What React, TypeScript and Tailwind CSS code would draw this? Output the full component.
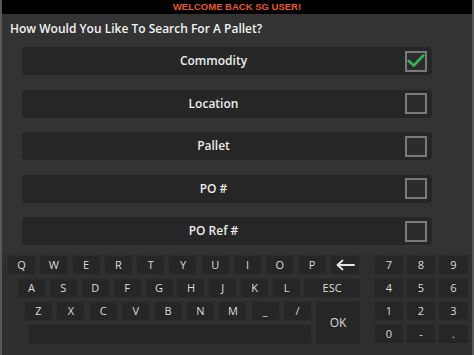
import React from 'react';

const options = ['Commodity', 'Location', 'Pallet', 'PO #', 'PO Ref #'];

function Key({ label, className = '' }: { label: React.ReactNode; className?: string }) {
  return (
    <div
      className={`flex h-[20px] items-center justify-center rounded-[4px] bg-[#262626] text-[11px] text-[#dcdcdc] shadow-[inset_0_0_0_1px_#2e2e2e] ${className}`}
    >
      {label}
    </div>
  );
}

function Checkbox({ checked }: { checked: boolean }) {
  return (
    <div className="flex h-[21px] w-[22px] items-center justify-center border-2 border-[#7a7a7a] bg-[#2c2c2c]">
      {checked && (
        <svg width="20" height="16" viewBox="0 0 20 16">
          <path d="M2 8 L7.5 13 L18 2" fill="none" stroke="#35b552" strokeWidth="3" strokeLinecap="round" strokeLinejoin="round" />
        </svg>
      )}
    </div>
  );
}

export default function App() {
  const row1 = ['Q', 'W', 'E', 'R', 'T', 'Y', 'U', 'I', 'O', 'P'];
  const row2 = ['A', 'S', 'D', 'F', 'G', 'H', 'J', 'K', 'L'];
  const row3 = ['Z', 'X', 'C', 'V', 'B', 'N', 'M', '_', '/'];
  const numpad = ['7', '8', '9', '4', '5', '6', '1', '2', '3', '0', '-', '.'];

  return (
    <div
      className="flex h-[355px] w-[474px] flex-col overflow-hidden border-x-2 border-[#585858] bg-[#333333]"
      style={{ fontFamily: '"Open Sans", "Noto Sans", sans-serif' }}
    >
      {/* header */}
      <div className="flex h-[14px] shrink-0 items-center justify-center bg-black">
        <span
          className="text-[9.5px] font-bold leading-none text-[#e8582c]"
          style={{ fontFamily: '"Liberation Sans", Arial, sans-serif' }}
        >
          WELCOME BACK SG USER!
        </span>
      </div>

      <div className="pl-[8px] pt-[6px] text-[12px] font-semibold leading-[18px] text-[#f2f2f2]">
        How Would You Like To Search For A Pallet?
      </div>

      {/* options */}
      <div className="ml-[20px] mt-[9px] flex w-[410px] flex-col gap-[14.5px]">
        {options.map((opt, i) => (
          <div key={opt} className="flex h-[28px] items-center rounded-[4px] bg-[#262626] pr-[5px]">
            <div className="flex-1 text-center text-[12px] font-semibold text-[#ececec]">{opt}</div>
            <Checkbox checked={i === 0} />
          </div>
        ))}
      </div>

      {/* keyboard */}
      <div className="mt-[9px] flex flex-1 bg-[#2f2f2f] pl-[5px] pt-[1px]">
        <div className="flex w-[355px] flex-col gap-[3px]">
          <div className="flex gap-[3.3px]">
            {row1.map((k) => (
              <Key key={k} label={k} className="w-[29px]" />
            ))}
            <Key
              label={
                <svg width="20" height="12" viewBox="0 0 20 12">
                  <path d="M19 6 H3 M7.5 1.5 L2.5 6 L7.5 10.5" fill="none" stroke="#e6e6e6" strokeWidth="1.8" strokeLinecap="round" strokeLinejoin="round" />
                </svg>
              }
              className="w-[30px]"
            />
          </div>
          <div className="ml-[10px] flex gap-[2.9px]">
            {row2.map((k) => (
              <Key key={k} label={k} className="w-[29px]" />
            ))}
            <Key label="ESC" className="ml-[-0.9px] w-[58px] text-[#d9822e]" />
          </div>
          <div className="flex gap-[3px]">
            <div className="flex flex-col gap-[3px]">
              <div className="ml-[17px] flex gap-[3.4px]">
                {row3.map((k) => (
                  <Key key={k} label={k} className="w-[29px]" />
                ))}
              </div>
              <Key label="" className="ml-[21px] h-[21px] w-[284px]" />
            </div>
            <Key label="OK" className="h-[44px] w-[46px] text-[12px] text-[#8cc63f]" />
          </div>
        </div>
        <div className="ml-[12px] grid grid-cols-[30px_30px_31px] gap-x-[2px] gap-y-[3px] self-start">
          {numpad.map((k) => (
            <Key key={k} label={k} />
          ))}
        </div>
      </div>
    </div>
  );
}
